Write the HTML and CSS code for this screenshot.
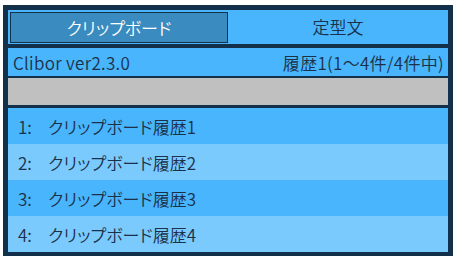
FILE: index.html
```html
<!DOCTYPE html>
<html lang="ja">
<head>
<meta charset="utf-8">
<link rel="stylesheet" href="styles.css">
</head>
<body>
<div class="window">
  <div class="tabs">
    <div class="tab active">クリップボード</div>
    <div class="tab">定型文</div>
  </div>
  <div class="info">
    <span>Clibor ver2.3.0</span>
    <span>履歴1(1～4件/4件中)</span>
  </div>
  <div class="search"></div>
  <div class="list">
    <div class="row"><span class="num">1:</span><span>クリップボード履歴1</span></div>
    <div class="row alt"><span class="num">2:</span><span>クリップボード履歴2</span></div>
    <div class="row"><span class="num">3:</span><span>クリップボード履歴3</span></div>
    <div class="row alt"><span class="num">4:</span><span>クリップボード履歴4</span></div>
  </div>
</div>
</body>
</html>
```
FILE: styles.css
```css
html, body {
  margin: 0;
  padding: 0;
  background: #ffffff;
}
body {
  font-family: "Noto Sans CJK JP", "Noto Sans", sans-serif;
  font-feature-settings: "palt";
  font-weight: 350;
  color: #1b3149;
}
.window {
  margin: 5px 0 0 3px;
  width: 440px;
  border: 5px solid #13304a;
  border-bottom-width: 4px;
}
.tabs {
  display: flex;
  height: 34px;
  background: #48b5fd;
  border-bottom: 4px solid #13304a;
}
.tab {
  flex: 1;
  display: flex;
  align-items: center;
  justify-content: center;
  font-size: 17px;
  padding-bottom: 1px;
}
.tab.active {
  flex: 0 0 218px;
  box-sizing: border-box;
  margin: 2px 0 1px 2px;
  background: #3a8bc0;
  border: 1px solid #15324c;
  color: #ffffff;
}
.info {
  height: 28px;
  display: flex;
  align-items: center;
  justify-content: space-between;
  padding: 0 4px 0 5px;
  background: #48b5fd;
  border-bottom: 2px solid #13304a;
  font-size: 17px;
  letter-spacing: 0.3px;
}
.search {
  height: 27px;
  background: #c0c0c0;
  border-bottom: 3px solid #13304a;
}
.row {
  height: 36px;
  display: flex;
  align-items: center;
  padding-left: 10px;
  background: #48b5fd;
  font-size: 17px;
}
.row.alt {
  background: #7bcafe;
}
.num {
  width: 30px;
}
```
